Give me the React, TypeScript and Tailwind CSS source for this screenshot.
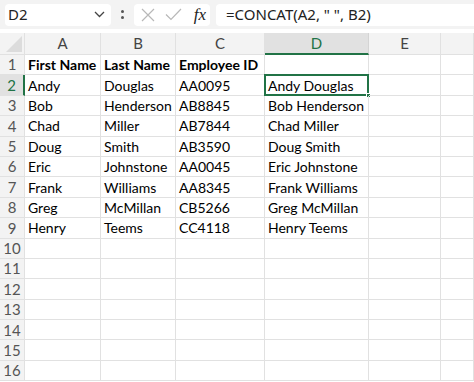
import React from 'react';

const cols = [
  { key: 'A', w: 'w-[76px]' },
  { key: 'B', w: 'w-[75px]' },
  { key: 'C', w: 'w-[89px]' },
  { key: 'D', w: 'w-[104px]' },
  { key: 'E', w: 'w-[72px]' },
  { key: 'F', w: 'flex-1' },
];

const data: string[][] = [
  ['First Name', 'Last Name', 'Employee ID', ''],
  ['Andy', 'Douglas', 'AA0095', 'Andy Douglas'],
  ['Bob', 'Henderson', 'AB8845', 'Bob Henderson'],
  ['Chad', 'Miller', 'AB7844', 'Chad Miller'],
  ['Doug', 'Smith', 'AB3590', 'Doug Smith'],
  ['Eric', 'Johnstone', 'AA0045', 'Eric Johnstone'],
  ['Frank', 'Williams', 'AA8345', 'Frank Williams'],
  ['Greg', 'McMillan', 'CB5266', 'Greg McMillan'],
  ['Henry', 'Teems', 'CC4118', 'Henry Teems'],
];

const cellFont = { fontFamily: 'Lato, "Open Sans", sans-serif' };

export default function App() {
  const rows = Array.from({ length: 16 }, (_, i) => i + 1);

  return (
    <div className="w-[474px] h-[382px] overflow-hidden bg-white font-['Noto_Sans',sans-serif]">
      {/* Formula bar */}
      <div className="h-[29px] bg-[#f3f3f3] flex items-center">
        <div className="ml-[5px] w-[106px] h-[22px] bg-white rounded-[4px] flex items-center justify-between pl-[3px] pr-[6px]">
          <span className="text-[15px] text-[#222] leading-none">D2</span>
          <svg width="11" height="7" viewBox="0 0 11 7" fill="none">
            <path d="M1 1l4.5 4.5L10 1" stroke="#444" strokeWidth="1.3" />
          </svg>
        </div>
        <div className="w-[23px] flex flex-col items-center gap-[3px]">
          <span className="w-[3px] h-[3px] rounded-full bg-[#555]" />
          <span className="w-[3px] h-[3px] rounded-full bg-[#555]" />
        </div>
        <div className="w-[76px] h-[22px] bg-white rounded-[4px] flex items-center pl-[7px] pr-[4px]">
          <svg width="14" height="14" viewBox="0 0 14 14" fill="none">
            <path d="M1 1l12 12M13 1L1 13" stroke="#b8b8b8" strokeWidth="1.2" />
          </svg>
          <svg className="ml-[10px]" width="17" height="13" viewBox="0 0 17 13" fill="none">
            <path d="M1 6.5l5 5L16 1" stroke="#b8b8b8" strokeWidth="1.2" />
          </svg>
          <span className="ml-auto text-[17px] italic text-[#222] leading-none font-['Liberation_Serif',serif]">fx</span>
        </div>
        <div className="ml-[6px] flex-1 h-[22px] bg-white rounded-l-[4px] flex items-center pl-[10px]">
          <span className="text-[15px] text-[#222] leading-none whitespace-pre">=CONCAT(A2, " ", B2)</span>
        </div>
      </div>

      {/* Grid */}
      <div className="mt-[4px]" style={cellFont}>
        {/* Column headers */}
        <div className="flex h-[22px]">
          <div className="w-[25px] bg-[#f3f3f3] border-r border-b border-[#e1e1e1] relative overflow-hidden">
            <div className="absolute right-[2px] bottom-[2px] w-0 h-0 border-l-[16px] border-l-transparent border-b-[16px] border-b-[#dcdcdc]" />
          </div>
          {cols.map((c) => (
            <div
              key={c.key}
              className={`${c.w} flex items-center justify-center text-[15px] border-r ${
                c.key === 'D'
                  ? 'bg-[#e1e1e1] text-[#217346] border-b-2 border-b-[#217346] border-r-[#d4d4d4]'
                  : 'bg-[#f3f3f3] text-[#444] border-b border-[#e1e1e1]'
              }`}
            >
              {c.key !== 'F' && c.key}
            </div>
          ))}
        </div>

        {rows.map((r) => {
          const vals = data[r - 1] ?? [];
          return (
            <div key={r} className="flex h-[20.4px]">
              <div
                className={`w-[25px] flex items-center justify-center text-[15px] border-b border-[#e1e1e1] ${
                  r === 2
                    ? 'bg-[#e1e1e1] text-[#217346] border-r-2 border-r-[#217346]'
                    : 'bg-[#f3f3f3] text-[#555] border-r border-r-[#e1e1e1]'
                }`}
              >
                {r}
              </div>
              {cols.map((c, ci) => {
                const v = vals[ci] ?? '';
                const selected = r === 2 && c.key === 'D';
                return (
                  <div
                    key={c.key}
                    className={`${c.w} relative flex items-center pl-[3px] text-[14px] text-black whitespace-nowrap border-r border-b border-[#e1e1e1] ${
                      r === 1 ? 'font-bold' : ''
                    }`}
                  >
                    {v}
                    {selected && (
                      <>
                        <div className="absolute -left-[1px] -top-[1px] -right-[1px] -bottom-[1px] border-2 border-[#217346]" />
                        <div className="absolute -right-[3px] -bottom-[3px] w-[5px] h-[5px] bg-[#217346] border border-white" />
                      </>
                    )}
                  </div>
                );
              })}
            </div>
          );
        })}
      </div>
    </div>
  );
}
